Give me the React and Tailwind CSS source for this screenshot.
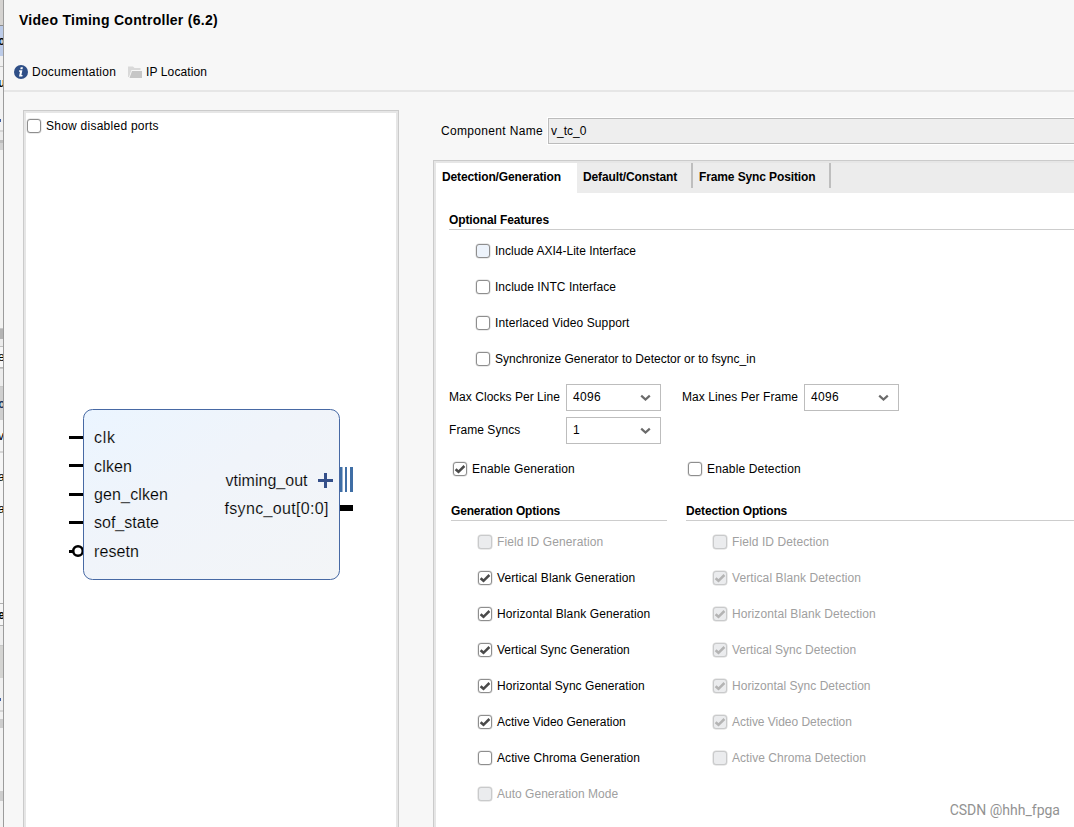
import React from "react";

const box = "relative flex h-[14px] w-[14px] shrink-0 items-center justify-center rounded-[3px] border";

function Check({ label, checked, disabled, focused, track = "" }) {
  const tone = disabled
    ? "border-[#c9cacb] bg-[#ebecee]"
    : focused
      ? "border-[#8e8e8e] bg-[#edf3fb]"
      : "border-[#8e8e8e] bg-white";
  return (
    <div className="flex h-[14px] items-center gap-[5px] whitespace-nowrap">
      <span className={`${box} ${tone} shadow-[0_0_0_0.5px_#d8d8d8]`}>
        {checked && (
          <svg width="12" height="12" viewBox="0 0 12 12" className="shrink-0">
            <path
              d="M1.600 6.200L4.500 8.800L10.400 3"
              fill="none"
              stroke={disabled ? "#b4b4b4" : "#4a4a4a"}
              strokeWidth="2.5"
            />
          </svg>
        )}
      </span>
      <span className={`leading-[14px] ${track} ${disabled ? "text-[#a0a0a0]" : "text-black"}`}>{label}</span>
    </div>
  );
}

function Select({ value }) {
  return (
    <div className="flex h-[27px] w-[95px] shrink-0 items-center justify-between border border-[#bdbdbd] bg-white pr-[9px] pl-[6px]">
      <span className="pb-[2px] leading-[14px] tracking-[0.3px]">{value}</span>
      <svg width="11" height="8" viewBox="0 0 11 8">
        <path d="M1.2 1.6 L5.5 5.6 L9.8 1.6" fill="none" stroke="#6b6b6b" strokeWidth="2.2" />
      </svg>
    </div>
  );
}

const generation = [
  { label: "Field ID Generation", disabled: true, track: "tracking-[0.12px]" },
  { label: "Vertical Blank Generation", checked: true, track: "tracking-[0.12px]" },
  { label: "Horizontal Blank Generation", checked: true, track: "tracking-[0.12px]" },
  { label: "Vertical Sync Generation", checked: true, track: "tracking-[0.03px]" },
  { label: "Horizontal Sync Generation", checked: true, track: "tracking-[0.04px]" },
  { label: "Active Video Generation", checked: true, track: "tracking-[-0.02px]" },
  { label: "Active Chroma Generation", track: "tracking-[0.07px]" },
  { label: "Auto Generation Mode", disabled: true, track: "tracking-[0.02px]" },
];

const detection = [
  { label: "Field ID Detection", track: "tracking-[0.09px]" },
  { label: "Vertical Blank Detection", checked: true, track: "tracking-[0.1px]" },
  { label: "Horizontal Blank Detection", checked: true, track: "tracking-[0.09px]" },
  { label: "Vertical Sync Detection", checked: true, track: "tracking-[0.03px]" },
  { label: "Horizontal Sync Detection", checked: true, track: "tracking-[0.02px]" },
  { label: "Active Video Detection", checked: true, track: "tracking-[-0.03px]" },
  { label: "Active Chroma Detection", track: "tracking-[0.05px]" },
];

/* Sliver of the parent window that shows beside the dialog. */
const sliver = [
  ["h-[25px] bg-[#d5d3d1]", "", ""],
  ["h-[31px] bg-[#bccbe8] border-t border-[#8c8c8c]", "o", "font-bold"],
  ["h-[11px] bg-[#f0f0f0] border-b border-[#c0c0c0]", "", ""],
  ["h-[32px] bg-[#f2f2f2]", "u", "font-bold"],
  ["h-[20px] bg-[#f2f2f2]", "", ""],
  ["h-[3px] w-[1px] bg-[#3f5fa0]", "", ""],
  ["h-[10px] bg-[#f2f2f2] border-b-2 border-[#d6d6d6]", "", ""],
  ["h-[8px] bg-[#ececec]", "", ""],
  ["h-[3px] bg-[#bdbdbd]", "", ""],
  ["h-[7px] bg-[#d2d2d2]", "", ""],
  ["h-[179px] bg-[#f2f2f1] border-b border-[#c8c8c8]", "", ""],
  ["h-[10px] bg-[#b4b4b4]", "", ""],
  ["h-[8px] bg-[#ececec] border-b border-[#c0c0c0]", "", ""],
  ["h-[21px] bg-[#f7f7f7] border-b border-[#b8b8b8]", "e", ""],
  ["h-[19px] bg-[#ececec] border-y border-[#c8c8c8]", "", ""],
  ["h-[33px] bg-[#cfcfcf]", "o", "font-bold text-[#16305c]"],
  ["h-[33px] bg-[#f4f4f4] border-b-2 border-[#d6d6d6]", "v", ""],
  ["h-[48px] bg-[#f6f6f6]", "a", ""],
  ["h-[16px] bg-[#f6f6f6]", "a", ""],
  ["h-[87px] bg-[#f6f6f6] border-b border-[#b0b0b0]", "", ""],
  ["h-[22px] bg-[#f6f6f6] border-b border-[#b0b0b0]", "e", "font-bold"],
  ["h-[20px] bg-[#eeeeee] border-b border-[#c8c8c8]", "", ""],
  ["h-[32px] bg-[#d4d4d2]", "", ""],
  ["h-[20px] bg-[#f0f0f0]", "", ""],
  ["h-[3px] w-[1px] bg-[#3f5fa0]", "", ""],
  ["h-[11px] bg-[#f0f0f0] border-b-2 border-[#d6d6d6]", "", ""],
  ["h-[7px] bg-[#f2f2f2]", "", ""],
  ["h-[9px] bg-[#cdcdcd]", "", ""],
  ["h-[63px] bg-[#f2f2f2]", "", ""],
  ["h-[10px] bg-[#cdcdcd]", "", ""],
  ["h-[30px] bg-[#f2f2f2]", "", ""],
];

function Sliver() {
  return (
    <div className="flex w-[4px] shrink-0 flex-col overflow-hidden border-r border-[#9c9c9c] bg-[#f2f2f2] text-[12px]">
      {sliver.map(([cls, ch, tone], i) => (
        <div key={i} className={`flex shrink-0 items-center overflow-hidden ${cls}`}>
          {ch && <span className={`-ml-[2px] leading-[14px] ${tone}`}>{ch}</span>}
        </div>
      ))}
    </div>
  );
}

function Block() {
  const pins = ["clk", "clken", "gen_clken", "sof_state", "resetn"];
  return (
    <svg width="290" height="176" viewBox="67 407 290 176" className="mt-[274px] ml-[40px]">
      <defs>
        <linearGradient id="body" x1="0" y1="0" x2="1" y2="1">
          <stop offset="0" stopColor="#ebf5ff" />
          <stop offset="0.45" stopColor="#f0f4fa" />
          <stop offset="1" stopColor="#f3f5f7" />
        </linearGradient>
      </defs>
      <rect x="83.5" y="409.5" width="256" height="170" rx="9" fill="url(#body)" stroke="#4769a4" />
      {[436, 464, 493, 521].map((y) => (
        <rect key={y} x="69" y={y} width="14" height="3" fill="#000" />
      ))}
      <rect x="69" y="550" width="4" height="3" fill="#000" />
      <circle cx="78" cy="551" r="4.8" fill="#fff" stroke="#000" strokeWidth="2.6" />
      <path d="M83.5 544V558" stroke="#4769a4" />
      <g fontSize="16" fill="#000" fontFamily="'Liberation Sans', Arial, sans-serif" stroke="#f0f5fb" strokeWidth="0.15">
        {pins.map((p, i) => (
          <text key={p} x="94" y={[443, 472, 500, 528, 557][i]} textLength={[21, 38, 74, 65, 45][i]}>
            {p}
          </text>
        ))}
        <text x="225.500" y="486" textLength="82">vtiming_out</text>
        <text x="224.500" y="514" textLength="104">fsync_out[0:0]</text>
      </g>
      <path d="M318 480.500H333M325.500 473V488" stroke="#35508a" strokeWidth="3" />
      <path d="M340 467h2.500v25h-2.500zM345 467h2v25h-2zM350 467h3v25h-3z" fill="#3f6ea5" />
      <rect x="340" y="505" width="13" height="6" fill="#000" />
    </svg>
  );
}

export default function App() {
  return (
    <div className="relative flex h-[827px] w-[1074px] overflow-hidden bg-[#f7f7f7] font-['Liberation_Sans',Arial,sans-serif] text-[12px] text-black">
      <Sliver />
      <div className="flex min-w-0 flex-1 flex-col">
        <header className="flex h-[92px] shrink-0 flex-col border-b-2 border-[#e6e6e6] pt-[12px]">
          <h1 className="pl-[15px] text-[14px] leading-[16px] font-bold tracking-[0.28px]">Video Timing Controller (6.2)</h1>
          <div className="mt-[37px] flex h-[14px] items-center pl-[10px] leading-[14px]">
            <svg width="14" height="14" viewBox="0 0 14 14">
              <circle cx="7" cy="7" r="7" fill="#2f4f87" />
              <path d="M6.700 2.300h2.200l-.4 1.900h-2.200zM5.200 5.300h3.200l-1 4.600h1.200l-.3 1.500h-3.300l1-4.600H4.900z" fill="#fff" />
            </svg>
            <span className="ml-[4px] tracking-[0.26px]">Documentation</span>
            <svg width="14" height="12" viewBox="0 0 14 12" className="ml-[12px]">
              <path d="M0 11V0.500H5L6.500 2H12.500V4H3.500L1 11z" fill="#d9d9d9" />
              <path d="M4 5H14V12H1.500z" fill="#c6c6c6" />
            </svg>
            <span className="ml-[4px] tracking-[0.1px]">IP Location</span>
          </div>
        </header>

        <div className="flex min-h-0 flex-1">
          <section className="mt-[18px] ml-[19px] flex w-[376px] shrink-0 border border-b-0 border-[#cbcbcb]">
            <div className="flex flex-1 flex-col border-2 border-b-0 border-[#e6e6e6] bg-white pt-[6px] pl-[1px]">
              <Check label="Show disabled ports" track="tracking-[0.25px]" />
              <Block />
            </div>
          </section>

          <section className="ml-[34px] flex min-w-0 flex-1 flex-col pt-[25px]">
            <div className="flex h-[28px] items-center">
              <span className="w-[114px] shrink-0 pl-[8px] leading-[14px] tracking-[0.33px]">Component Name</span>
              <div className="flex h-[28px] flex-1 border border-r-0 border-white">
                <div className="flex flex-1 items-center border border-r-0 border-[#bcbcbc] bg-[#eeeeee] pl-[2px]">
                  v_tc_0
                </div>
              </div>
            </div>

            <div className="mt-[15px] flex flex-1 border-t border-l border-[#cbcbcb]">
              <div className="flex flex-1 flex-col border-t-2 border-l-2 border-[#e6e6e6] bg-white">
                <nav className="flex h-[30px] shrink-0 bg-[#ececec] leading-[28px] font-bold tracking-[-0.12px]">
                  <div className="w-[141px] bg-white pl-[6px]">Detection/Generation</div>
                  <div className="h-[25px] w-[116px] border-r-2 border-[#bebebe] pl-[6px]">Default/Constant</div>
                  <div className="h-[25px] w-[138px] border-r-2 border-[#bebebe] pl-[6px]">Frame Sync Position</div>
                </nav>

                <h2 className="mt-[19px] ml-[13px] h-[18px] border-b border-[#cdcdcd] leading-[16px] font-bold tracking-[-0.12px]">
                  Optional Features
                </h2>
                <div className="mt-[14px] ml-[40px] flex flex-col gap-[22px]">
                  <Check label="Include AXI4-Lite Interface" focused track="tracking-[0.01px]" />
                  <Check label="Include INTC Interface" track="tracking-[0.04px]" />
                  <Check label="Interlaced Video Support" track="tracking-[0.11px]" />
                  <Check label="Synchronize Generator to Detector or to fsync_in" track="tracking-[0.01px]" />
                </div>

                <div className="mt-[18px] flex h-[27px] pl-[13px] leading-[26px]">
                  <span className="w-[117px] tracking-[0.05px]">Max Clocks Per Line</span>
                  <Select value="4096" />
                  <span className="ml-[21px] w-[122px] tracking-[0.07px]">Max Lines Per Frame</span>
                  <Select value="4096" />
                </div>
                <div className="mt-[6px] flex h-[27px] pl-[13px] leading-[26px]">
                  <span className="w-[117px] tracking-[0.06px]">Frame Syncs</span>
                  <Select value="1" />
                </div>

                <div className="mt-[18px] flex pl-[17px]">
                  <div className="w-[235px]">
                    <Check label="Enable Generation" checked track="tracking-[0.17px]" />
                  </div>
                  <Check label="Enable Detection" track="tracking-[0.15px]" />
                </div>

                <div className="mt-[27px] flex pl-[15px]">
                  <div className="w-[216px]">
                    <h2 className="h-[18px] border-b border-[#cdcdcd] leading-[16px] font-bold tracking-[-0.16px]">
                      Generation Options
                    </h2>
                    <div className="mt-[14px] ml-[27px] flex flex-col gap-[22px]">
                      {generation.map((o) => (
                        <Check key={o.label} {...o} />
                      ))}
                    </div>
                  </div>
                  <div className="ml-[19px] flex-1">
                    <h2 className="h-[18px] border-b border-[#cdcdcd] leading-[16px] font-bold tracking-[-0.13px]">
                      Detection Options
                    </h2>
                    <div className="mt-[14px] ml-[27px] flex flex-col gap-[22px]">
                      {detection.map((o) => (
                        <Check key={o.label} {...o} disabled />
                      ))}
                    </div>
                  </div>
                </div>
              </div>
            </div>
          </section>
        </div>
      </div>
      <div className="absolute right-[14px] bottom-[9px] font-[Roboto,sans-serif] text-[14px] leading-[16px] text-[#929292]">
        CSDN @hhh_fpga
      </div>
    </div>
  );
}
